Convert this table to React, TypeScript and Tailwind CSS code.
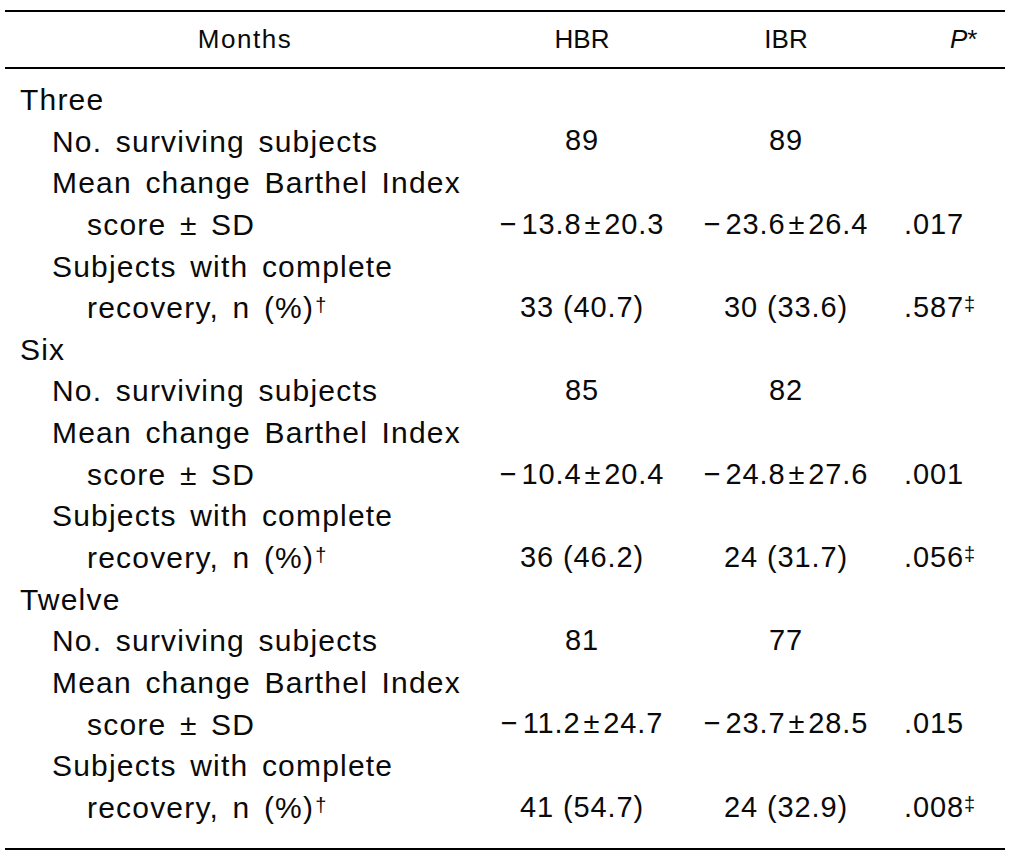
import React from 'react'

type Row = {
  label: string
  level: 0 | 1 | 2
  hbr?: string
  ibr?: string
  p?: string
  dagger?: boolean
}

const block = (name: string, v: string[][]): Row[] => [
  { label: name, level: 0 },
  { label: 'No. surviving subjects', level: 1, hbr: v[0][0], ibr: v[0][1] },
  { label: 'Mean change Barthel Index', level: 1 },
  { label: 'score \u00b1 SD', level: 2, hbr: v[1][0], ibr: v[1][1], p: v[1][2] },
  { label: 'Subjects with complete', level: 1 },
  { label: 'recovery, n (%)', level: 2, hbr: v[2][0], ibr: v[2][1], p: v[2][2], dagger: true },
]

const rows: Row[] = [
  ...block('Three', [
    ['89', '89'],
    ['-13.8+20.3', '-23.6+26.4', '.017'],
    ['33 (40.7)', '30 (33.6)', '.587'],
  ]),
  ...block('Six', [
    ['85', '82'],
    ['-10.4+20.4', '-24.8+27.6', '.001'],
    ['36 (46.2)', '24 (31.7)', '.056'],
  ]),
  ...block('Twelve', [
    ['81', '77'],
    ['-11.2+24.7', '-23.7+28.5', '.015'],
    ['41 (54.7)', '24 (32.9)', '.008'],
  ]),
]

const indent = ['pl-[15px]', 'pl-[47px]', 'pl-[82px]']

// "-a+b" -> −a±b with a little air round the signs
const Value = ({ v }: { v?: string }) => {
  if (!v) return null
  if (!v.startsWith('-')) return <>{v}</>
  const [a, b] = v.slice(1).split('+')
  return (
    <>
      <span className="mr-[4px]">{'\u2212'}</span>
      {a}
      <span className="mx-[3px]">{'\u00b1'}</span>
      {b}
    </>
  )
}

const App = () => {
  return (
    <div className="w-[1012px] h-[859px] bg-white pt-[10px] pl-[5px] text-[#0a0a0a] font-['Liberation_Sans',Arial,sans-serif]">
      <div className="w-[1000px] border-y-2 border-black">
        {/* Header */}
        <div className="grid grid-cols-[490px_174px_234px_1fr] h-[57px] items-center border-b-2 border-black text-[26px]">
          <div className="text-center pr-[10px] tracking-[0.06em]">Months</div>
          <div className="text-center">HBR</div>
          <div className="text-center">IBR</div>
          <div className="pl-[47px] italic">
            P<span className="not-italic">*</span>
          </div>
        </div>

        {/* Body */}
        <div className="pt-[8px] pb-[21px]">
          {rows.map((r, i) => (
            <div
              key={i}
              className="grid grid-cols-[490px_174px_234px_1fr] h-[41.65px] items-center whitespace-nowrap"
            >
              <div className={`${indent[r.level]} text-[30px] tracking-[0.04em] [word-spacing:4px]`}>
                {r.label}
                {r.dagger && <sup className="text-[20px] relative -top-[6px] ml-[1px]">{'\u2020'}</sup>}
              </div>
              <div className="text-center text-[29px] tracking-[0.03em]">
                <Value v={r.hbr} />
              </div>
              <div className="text-center text-[29px] tracking-[0.03em]">
                <Value v={r.ibr} />
              </div>
              <div className="pl-[1px] text-[29px] tracking-[0.03em]">
                {r.p}
                {r.dagger && <sup className="text-[20px] relative -top-[6px]">{'\u2021'}</sup>}
              </div>
            </div>
          ))}
        </div>
      </div>
    </div>
  )
}

export default App
